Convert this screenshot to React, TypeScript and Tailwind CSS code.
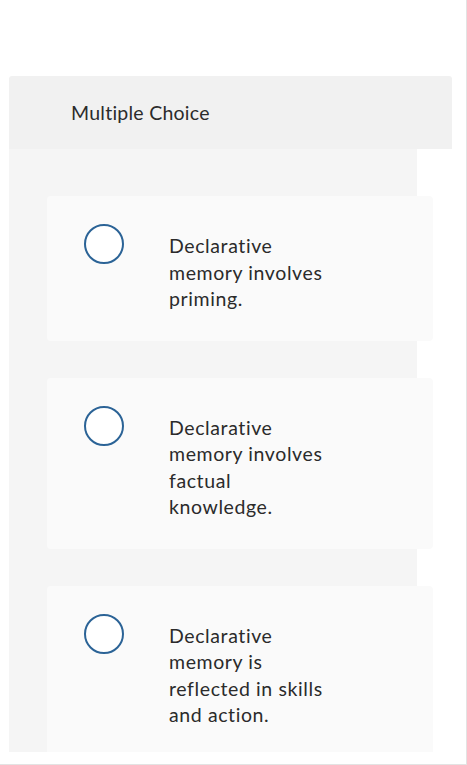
import React from 'react';

const options = [
  'Declarative memory involves priming.',
  'Declarative memory involves factual knowledge.',
  'Declarative memory is reflected in skills and action.',
];

function Option({ text }: { text: string }) {
  return (
    <div className="w-[386px] rounded-[4px] bg-[#fafafa] flex items-start pl-[37px] pt-[28px] pb-[28px]">
      <div className="w-[40px] h-[40px] shrink-0 rounded-full border-2 border-[#2b6396] bg-white" />
      <p className="ml-[45px] mt-[9px] w-[156px] text-[19.5px] leading-[26.5px] tracking-[0.6px] text-[#2b2b2b]">
        {text}
      </p>
    </div>
  );
}

export default function App() {
  return (
    <div
      className="w-[467px] h-[765px] bg-white overflow-hidden"
      style={{ fontFamily: 'Lato, "Open Sans", sans-serif' }}
    >
      <div className="w-[467px] h-[765px] border-r border-b border-[#e3e3e3] pt-[76px] pl-[9px]">
        <div className="w-[443px] h-[73px] bg-[#f1f1f1] rounded-t-[3px] flex items-center pl-[62px]">
          <h2 className="text-[19.5px] tracking-[0.25px] text-[#2b2b2b]">Multiple Choice</h2>
        </div>
        <div className="w-[449px] h-[603px] overflow-hidden">
          <div className="w-[408px] min-h-full bg-[#f5f5f5] pt-[47px] pl-[38px] flex flex-col gap-[37px]">
            {options.map((o) => (
              <Option key={o} text={o} />
            ))}
          </div>
        </div>
      </div>
    </div>
  );
}
